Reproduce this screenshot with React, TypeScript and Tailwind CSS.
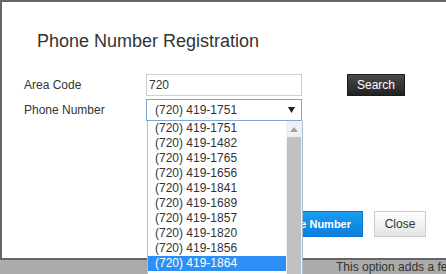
import React from "react";

const options = [
  "(720) 419-1751",
  "(720) 419-1482",
  "(720) 419-1765",
  "(720) 419-1656",
  "(720) 419-1841",
  "(720) 419-1689",
  "(720) 419-1857",
  "(720) 419-1820",
  "(720) 419-1856",
  "(720) 419-1864",
];

export default function App() {
  return (
    <div
      className="relative w-[446px] h-[274px] overflow-hidden bg-[#ababab] text-[#333]"
      style={{ fontFamily: '"Liberation Sans", Arial, sans-serif' }}
    >
      <div className="h-[260px] bg-white border-l-2 border-t-2 border-b-2 border-[#666] flex flex-col">
        <h1 className="mt-[30px] ml-[35px] text-[18px] leading-[18px] font-normal text-[#333]">
          Phone Number Registration
        </h1>
        <div className="mt-[24px] ml-[22px] flex items-center h-[22px]">
          <span className="w-[122px] text-[12px]">Area Code</span>
          <div className="w-[156px] h-[22px] border border-[#cfcfcf] flex items-center pl-[2px] text-[12px]">
            720
          </div>
          <button className="ml-[45px] w-[58px] h-[22px] bg-gradient-to-b from-[#4a4a4a] to-[#222] border border-[#1a1a1a] text-white text-[12px] leading-none">
            Search
          </button>
        </div>
        <div className="mt-[3px] ml-[22px] flex items-center h-[22px]">
          <span className="w-[122px] text-[12px]">Phone Number</span>
          <div className="w-[156px] h-[22px] border border-[#7fa6d8] flex items-center justify-between pl-[8px] pr-[6px] text-[12px]">
            <span>(720) 419-1751</span>
            <svg width="7" height="6" viewBox="0 0 7 6">
              <path d="M0 0 L7 0 L3.5 6 Z" fill="#222" />
            </svg>
          </div>
        </div>
        <div className="mt-[90px] mr-[20px] flex justify-end gap-[11px]">
          <button className="h-[26px] pl-[10px] pr-[11px] bg-gradient-to-b from-[#1a9cf2] to-[#0a80dc] border border-[#0a78d0] text-white text-[11px] font-bold">
            Add Phone Number
          </button>
          <button className="w-[52px] h-[26px] bg-gradient-to-b from-white to-[#e4e4e4] border border-[#cccccc] text-[#333] text-[12px]">
            Close
          </button>
        </div>
      </div>
      <div className="pl-[336px] text-[12px] leading-[14px] whitespace-nowrap text-[#333]">
        This option adds a fe
      </div>

      <div className="absolute left-[147px] top-[121px] w-[156px] h-[170px] bg-white border-l border-r border-[#a9bfdc] flex">
        <div className="flex-1 flex flex-col">
          {options.map((o, i) => (
            <div
              key={o}
              className={
                "h-[15px] leading-[15px] pl-[7px] text-[12px] " +
                (i === 9 ? "bg-[#2b8ff5] text-white" : "text-[#333]")
              }
            >
              {o}
            </div>
          ))}
        </div>
        <div className="w-[16px] bg-[#f0f0f0] flex flex-col">
          <div className="h-[16px] flex items-center justify-center">
            <svg width="8" height="5" viewBox="0 0 8 5">
              <path d="M0 5 L4 0 L8 5 Z" fill="#a3a3a3" />
            </svg>
          </div>
          <div className="flex-1 mx-[1px] bg-[#c1c1c1]" />
        </div>
      </div>
    </div>
  );
}
